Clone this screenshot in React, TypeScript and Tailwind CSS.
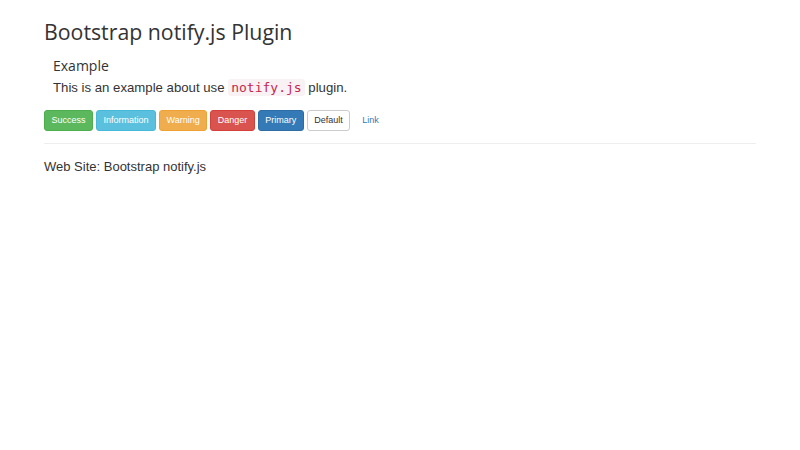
import React from "react";

const btnBase =
  "h-[21px] flex items-center px-[6.5px] rounded-[3px] border text-[9px] leading-none";

export default function App() {
  return (
    <div
      className="w-[800px] h-[450px] bg-white text-[#333] px-[44px]"
      style={{ fontFamily: '"Liberation Sans", Arial, sans-serif' }}
    >
      <h1
        className="pt-[19px] text-[21.3px] leading-[26px] font-normal"
        style={{ fontFamily: '"Open Sans", sans-serif' }}
      >
        Bootstrap notify.js Plugin
      </h1>
      <div className="pl-[9px]">
        <h4
          className="mt-[11px] text-[14px] leading-[20px] font-normal"
          style={{ fontFamily: '"Open Sans", sans-serif' }}
        >
          Example
        </h4>
        <p className="mt-[2px] text-[13.2px] leading-[20px]">
          This is an example about use{" "}
          <code
            className="text-[#c7254e] bg-[#f9f2f4] rounded-[3px] px-[3px] py-[1px] text-[13px]"
            style={{ fontFamily: '"DejaVu Sans Mono", monospace' }}
          >
            notify.js
          </code>{" "}
          plugin.
        </p>
      </div>
      <div className="mt-[12px] flex gap-[3px]">
        <button className={`${btnBase} bg-[#5cb85c] border-[#4cae4c] text-white`}>
          Success
        </button>
        <button className={`${btnBase} bg-[#5bc0de] border-[#46b8da] text-white`}>
          Information
        </button>
        <button className={`${btnBase} bg-[#f0ad4e] border-[#eea236] text-white`}>
          Warning
        </button>
        <button className={`${btnBase} bg-[#d9534f] border-[#d43f3a] text-white`}>
          Danger
        </button>
        <button className={`${btnBase} bg-[#337ab7] border-[#2e6da4] text-white`}>
          Primary
        </button>
        <button className={`${btnBase} bg-white border-[#ccc] text-[#333]`}>
          Default
        </button>
        <button className={`${btnBase} border-transparent text-[#337ab7] px-[8px]`}>
          Link
        </button>
      </div>
      <hr className="mt-[12px] border-0 border-t border-[#eee]" />
      <p className="mt-[13px] text-[13px] leading-[20px]">Web Site: Bootstrap notify.js</p>
    </div>
  );
}
